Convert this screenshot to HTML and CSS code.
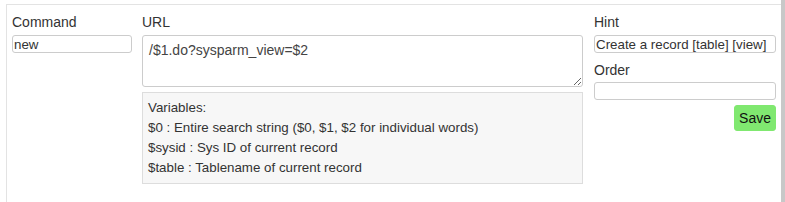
FILE: index.html
```html
<!DOCTYPE html>
<html lang="en">
<head>
    <meta charset="UTF-8">
    <title>Command</title>
    <link rel="stylesheet" href="styles.css">
</head>
<body>
<div class="page">
    <div class="panel">
        <div class="col col-cmd">
            <label>Command</label>
            <input type="text" class="field" value="new">
        </div>
        <div class="col col-url">
            <label>URL</label>
            <textarea class="url-area">/$1.do?sysparm_view=$2</textarea>
            <div class="vars">
                <div>Variables:</div>
                <div>$0 : Entire search string ($0, $1, $2 for individual words)</div>
                <div>$sysid : Sys ID of current record</div>
                <div>$table : Tablename of current record</div>
            </div>
        </div>
        <div class="col col-side">
            <label>Hint</label>
            <input type="text" class="field" value="Create a record [table] [view]">
            <label class="order-label">Order</label>
            <input type="text" class="field" value="">
            <div class="actions">
                <button class="save">Save</button>
            </div>
        </div>
    </div>
    <div class="bar"></div>
</div>
</body>
</html>
```

FILE: styles.css
```css
*{
    font-family: Arial, "Liberation Sans", sans-serif;
    box-sizing: border-box;
}
html, body{
    margin: 0;
    height: 100%;
    background: #fff;
    color: #333;
}
.page{
    display: flex;
    height: 100%;
}
.panel{
    flex: 1;
    margin: 4px 0 0 6px;
    border-top: 1px solid #e3e3e3;
    border-left: 1px solid #e3e3e3;
    padding: 7px 0 0 5px;
    display: flex;
    align-items: flex-start;
}
.bar{
    width: 4px;
    background: #c8c8c8;
}
.col{
    display: flex;
    flex-direction: column;
}
.col label{
    display: block;
    font-size: 14px;
    line-height: 20px;
    margin-bottom: 3px;
}
.col-cmd{
    width: 120px;
    margin-right: 10px;
}
.col-url{
    width: 441px;
    margin-right: 11px;
}
.col-side{
    width: 182px;
}
.field{
    height: 18px;
    width: 100%;
    margin: 0;
    padding: 0 1px;
    font-size: 13.33px;
    line-height: 16px;
    color: #333;
    border: 1px solid #ccc;
    border-radius: 3px;
    outline: none;
}
.url-area{
    height: 52px;
    width: 100%;
    margin: 0;
    padding: 6px 6px;
    font-size: 14px;
    line-height: 16px;
    color: #444;
    border: 1px solid #ccc;
    border-radius: 3px;
    resize: vertical;
    outline: none;
}
.vars{
    margin-top: 5px;
    padding: 5px 5px;
    background: #f7f7f7;
    border: 1px solid #ddd;
    font-size: 13.33px;
    line-height: 20px;
    color: #333;
}
.order-label{
    margin-top: 7px;
    margin-bottom: 2px !important;
}
.actions{
    display: flex;
    justify-content: flex-end;
    margin-top: 5px;
}
.save{
    height: 26px;
    padding: 0 4px;
    font-size: 14px;
    line-height: 16px;
    color: #111;
    background: #80e870;
    border: 1px solid #80e870;
    border-radius: 3px;
    cursor: pointer;
}
```
